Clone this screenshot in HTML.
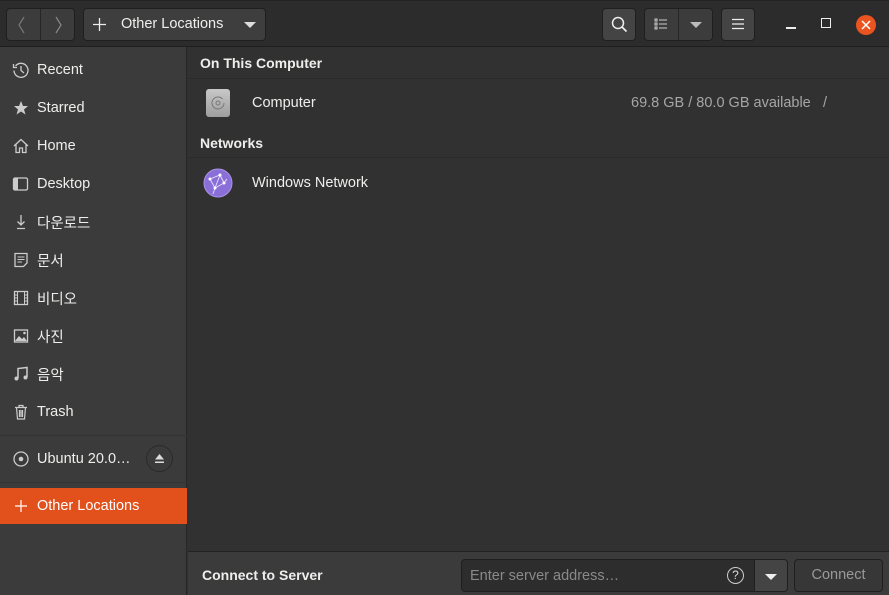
<!DOCTYPE html>
<html><head><meta charset="utf-8"><style>
*{box-sizing:border-box;margin:0;padding:0}
body{width:889px;height:595px;overflow:hidden;background:#313131;font-family:"Liberation Sans","Noto Sans CJK KR",sans-serif;font-size:14.5px;color:#eeeeec;position:relative}
.hdr{position:absolute;left:0;top:0;width:889px;height:47px;background:#2c2c2c;border-bottom:1px solid #1e1e1e;border-top:1px solid #222}
.btn{position:absolute;background:#3c3c3c;border:1px solid #1f1f1f;border-radius:4px}
.side{position:absolute;left:0;top:47px;width:187px;height:548px;background:#3b3b3b;border-right:1px solid #262626}
.si{position:absolute;left:0;width:187px;height:38px;display:flex;align-items:center;padding-left:37px}
.si svg{position:absolute;left:12px}
.main{position:absolute;left:188px;top:47px;right:0;height:504px;background:#313131}
.hd{position:absolute;left:12px;font-weight:bold;font-size:14px}
.sep{position:absolute;left:0;right:0;height:1px;background:#2a2a2a}
.bot{position:absolute;left:188px;top:551px;right:0;height:44px;background:#3b3b3b;border-top:1px solid #222}
</style></head><body>
<div class="hdr">
 <div class="btn" style="left:6px;top:7px;width:69px;height:33px"></div>
 <div style="position:absolute;left:40px;top:8px;width:1px;height:31px;background:#262626"></div>
 <svg style="position:absolute;left:17px;top:15px" width="10" height="18"><path d="M7 1L2 9L7 17" stroke="#777" fill="none" stroke-width="1.2"/></svg>
 <svg style="position:absolute;left:53px;top:15px" width="10" height="18"><path d="M3 1L8 9L3 17" stroke="#888" fill="none" stroke-width="1.2"/></svg>
 <div class="btn" style="left:83px;top:7px;width:183px;height:33px;background:#3e3e3e"></div>
 <svg style="position:absolute;left:93px;top:17px" width="13" height="13"><path d="M6.5 0V13M0 6.5H13" stroke="#eee" stroke-width="1.3"/></svg>
 <div style="position:absolute;left:121px;top:15px;font-size:14.5px">Other Locations</div>
 <svg style="position:absolute;left:244px;top:21px" width="12" height="6"><path d="M0 0H12L6 6Z" fill="#ddd"/></svg>
 <div class="btn" style="left:602px;top:7px;width:34px;height:33px;background:#444"></div>
 <svg style="position:absolute;left:611px;top:15px" width="17" height="17"><circle cx="7" cy="7" r="5.5" stroke="#eee" stroke-width="1.5" fill="none"/><path d="M11 11L15.5 15.5" stroke="#eee" stroke-width="1.7"/></svg>
 <div class="btn" style="left:644px;top:7px;width:69px;height:33px"></div>
 <div style="position:absolute;left:678px;top:8px;width:1px;height:31px;background:#262626"></div>
 <svg style="position:absolute;left:654px;top:17px" width="14" height="12"><g fill="none" stroke="#ccc"><rect x="1" y="1" width="2" height="2"/><rect x="1" y="5" width="2" height="2"/><rect x="1" y="9" width="2" height="2"/></g><path d="M5 2H13M5 6H13M5 10H13" stroke="#ccc"/></svg>
 <svg style="position:absolute;left:690px;top:21px" width="12" height="6"><path d="M0 0H12L6 6Z" fill="#bbb"/></svg>
 <div class="btn" style="left:721px;top:7px;width:34px;height:33px;background:#444"></div>
 <svg style="position:absolute;left:731px;top:17px" width="14" height="12"><path d="M1 1.5H13M1 6H13M1 10.5H13" stroke="#eee" stroke-width="1.3"/></svg>
 <div style="position:absolute;left:786px;top:26px;width:10px;height:1.5px;background:#eee"></div>
 <div style="position:absolute;left:821px;top:17px;width:10px;height:10px;border:1.5px solid #eee"></div>
 <div style="position:absolute;left:856px;top:14px;width:20px;height:20px;border-radius:50%;background:#e95420"></div>
 <svg style="position:absolute;left:861px;top:19px" width="10" height="10"><path d="M1 1L9 9M9 1L1 9" stroke="#fff" stroke-width="1.5"/></svg>
</div>
<div class="side">
 <div class="si" style="top:4px"><svg width="18" height="18"><path d="M3.5 5A7 7 0 1 1 2 9.5" fill="none" stroke="#ccc" stroke-width="1.3"/><path d="M1.5 3V6.5H5" fill="none" stroke="#ccc" stroke-width="1.3"/><path d="M9 5V9.5L12 12" fill="none" stroke="#ccc" stroke-width="1.3"/></svg>Recent</div>
 <div class="si" style="top:42px"><svg width="18" height="18"><path d="M9 2L11 7H16L12 10.5L13.5 15.5L9 12.5L4.5 15.5L6 10.5L2 7H7Z" fill="#ccc"/></svg>Starred</div>
 <div class="si" style="top:80px"><svg width="18" height="18"><path d="M2 9L9 2.5L16 9M4 7.5V15.5H7.5V11H10.5V15.5H14V7.5" fill="none" stroke="#ccc" stroke-width="1.3"/></svg>Home</div>
 <div class="si" style="top:118px"><svg width="18" height="18"><rect x="1.5" y="3" width="14" height="12" rx="1.5" fill="none" stroke="#ccc" stroke-width="1.3"/><rect x="2" y="3.5" width="4" height="11" fill="#ccc"/></svg>Desktop</div>
 <div class="si" style="top:156px"><svg width="18" height="18"><path d="M9 2V12M5.5 8.5L9 12L12.5 8.5M5 15.5H13" fill="none" stroke="#ccc" stroke-width="1.3"/></svg>다운로드</div>
 <div class="si" style="top:194px"><svg width="18" height="18"><path d="M3 2.5H15V12L11.5 15.5H3Z" fill="none" stroke="#ccc" stroke-width="1.3"/><path d="M5.5 6H12.5M5.5 8.5H12.5M5.5 11H10" stroke="#ccc"/></svg>문서</div>
 <div class="si" style="top:232px"><svg width="18" height="18"><rect x="2.5" y="2.5" width="13" height="13" fill="none" stroke="#ccc" stroke-width="1.3"/><path d="M5.5 2.5V15.5M12.5 2.5V15.5M2.5 9H5.5M12.5 9H15.5M2.5 6H5.5M12.5 6H15.5M2.5 12H5.5M12.5 12H15.5" stroke="#ccc"/></svg>비디오</div>
 <div class="si" style="top:270px"><svg width="18" height="18"><rect x="2.5" y="3" width="13" height="12" fill="none" stroke="#ccc" stroke-width="1.3"/><path d="M3 14L7 9L10 12L12 10L15 14Z" fill="#ccc"/><circle cx="12.5" cy="6" r="1.3" fill="#ccc"/></svg>사진</div>
 <div class="si" style="top:308px"><svg width="18" height="18"><path d="M6 13V3.5L15 2.5V12" fill="none" stroke="#ccc" stroke-width="1.5"/><circle cx="4.5" cy="13.5" r="2" fill="#ccc"/><circle cx="13.5" cy="12.5" r="2" fill="#ccc"/></svg>음악</div>
 <div class="si" style="top:346px"><svg width="18" height="18"><path d="M3 4.5H15M7 4.5V2.5H11V4.5M4.5 4.5L5.5 16H12.5L13.5 4.5M7.5 7V14M9 7V14M10.5 7V14" fill="none" stroke="#ccc" stroke-width="1.2"/></svg>Trash</div>
 <div style="position:absolute;left:0;top:388px;width:187px;height:1px;background:#333"></div>
 <div class="si" style="top:393px"><svg width="18" height="18"><circle cx="9" cy="9" r="7" fill="none" stroke="#ccc" stroke-width="1.3"/><circle cx="9" cy="9" r="2.3" fill="#ccc"/></svg>Ubuntu 20.0…</div>
 <div style="position:absolute;left:146px;top:398px;width:27px;height:27px;border-radius:50%;border:1px solid #2a2a2a"></div>
 <svg style="position:absolute;left:154px;top:406px" width="11" height="11"><path d="M5.5 1L10 6.5H1Z M1 8.5H10V10H1Z" fill="#ddd"/></svg>
 <div style="position:absolute;left:0;top:435px;width:187px;height:1px;background:#333"></div>
 <div class="si" style="top:441px;height:36px;background:#e2501c;color:#fff"><svg width="18" height="18"><path d="M9 3V15M3 9H15" stroke="#fff" stroke-width="1.2"/></svg>Other Locations</div>
</div>
<div class="main">
 <div class="hd" style="top:8px">On This Computer</div>
 <div class="sep" style="top:31px"></div>
 <div style="position:absolute;left:18px;top:42px;width:24px;height:28px;border-radius:3px;background:linear-gradient(#c8c8c8,#9e9e9e)"></div>
 <svg style="position:absolute;left:21px;top:47px" width="18" height="18"><path d="M13.5 5A6 6 0 1 0 15 9" fill="none" stroke="#777" stroke-width="1"/><circle cx="9" cy="9" r="2" fill="none" stroke="#777"/></svg>
 <div style="position:absolute;left:64px;top:48px">Computer</div>
 <div style="position:absolute;left:443px;top:48px;color:#a6a6a6">69.8 GB / 80.0 GB available</div>
 <div style="position:absolute;left:635px;top:48px;color:#a6a6a6">/</div>
 <div class="hd" style="top:88px">Networks</div>
 <div class="sep" style="top:110px"></div>
 <svg style="position:absolute;left:15px;top:121px" width="30" height="30"><circle cx="15" cy="15" r="14" fill="#8b6fd8"/><circle cx="15" cy="15" r="14" fill="none" stroke="#a893e6" stroke-width="1"/><path d="M7 11L17 7L21 15L12 20L7 11M17 7L12 20M21 15L24 11M12 20L10 26M7 11L12 20" stroke="#e8e0ff" stroke-width="0.9" fill="none"/><g fill="#fff"><circle cx="7" cy="11" r="1.5"/><circle cx="17" cy="7" r="1.5"/><circle cx="21" cy="15" r="1.5"/><circle cx="12" cy="20" r="1.5"/></g></svg>
 <div style="position:absolute;left:64px;top:128px">Windows Network</div>
</div>
<div class="bot">
 <div style="position:absolute;left:14px;top:15px;font-weight:bold;font-size:14px">Connect to Server</div>
 <div style="position:absolute;left:273px;top:7px;width:327px;height:33px;border:1px solid #1f1f1f;border-radius:4px;background:#2d2d2d;overflow:hidden">
  <div style="position:absolute;left:8px;top:8px;color:#8a8a8a">Enter server address…</div>
  <div style="position:absolute;left:265px;top:7px;width:17px;height:17px;border:1.3px solid #ccc;border-radius:50%;font-size:12px;text-align:center;line-height:15px;color:#ddd">?</div>
  <div style="position:absolute;left:292px;top:0;width:35px;height:33px;background:#444;border-left:1px solid #1f1f1f"></div>
  <svg style="position:absolute;left:303px;top:14px" width="12" height="6"><path d="M0 0H12L6 6Z" fill="#eee"/></svg>
 </div>
 <div class="btn" style="left:606px;top:7px;width:89px;height:33px;background:#373737;color:#999;text-align:center;line-height:31px">Connect</div>
</div>
</body></html>
